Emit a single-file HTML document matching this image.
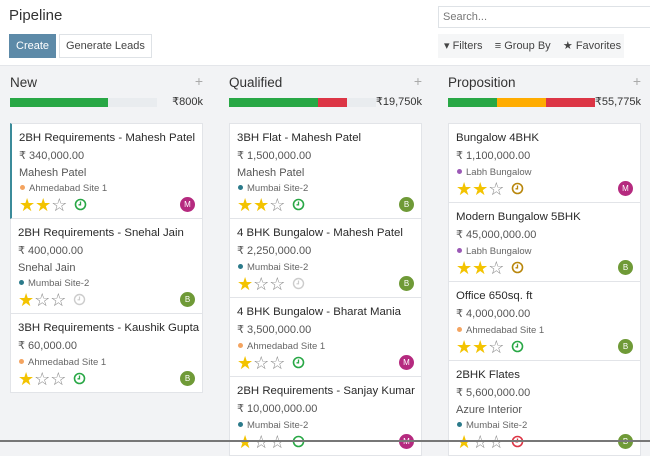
<!DOCTYPE html>
<html><head><meta charset="utf-8"><style>
*{box-sizing:border-box;margin:0;padding:0}
body{width:650px;height:444px;overflow:hidden;background:#f2f3f5;font-family:"Liberation Sans",sans-serif;color:#333;position:relative}
.top{position:absolute;left:0;top:0;width:650px;height:66px;background:#fff;border-bottom:1px solid #e4e6ea}
.title{position:absolute;left:9px;top:7px;font-size:15px;color:#333}
.btn{position:absolute;top:34px;height:24px;font-size:11px;line-height:22px;padding:0 6px;border:1px solid #dee2e6}
.create{left:9px;background:#5d8aa8;color:#fff;border-color:#5d8aa8}
.gen{left:59px;background:#fff;color:#444}
.search{position:absolute;left:438px;top:6px;width:220px;height:22px;border:1px solid #dee2e6;font-size:11px;color:#777;padding:4px 4px;line-height:13px}
.fbar{position:absolute;left:438px;top:34px;width:186px;height:24px;background:#f5f6f7;font-size:11px;line-height:24px;color:#444;padding-left:6px;white-space:nowrap}
.col{position:absolute;top:67px;width:193px}
.ch{position:absolute;top:8px;left:0;font-size:13.5px;color:#333}
.plus{position:absolute;top:6px;right:0;font-size:14px;color:#aaa}
.bar{position:absolute;top:31px;left:0;width:147px;height:9px;background:#e9ecef;display:flex}
.amt{position:absolute;top:28px;right:0;font-size:11px;color:#333}
.cards{position:absolute;top:56px;left:0;width:193px}
.card{background:#fff;border:1px solid #e2e4e8;border-top:none;padding:5px 7px 0 7px;position:relative}
.card:first-child{border-top:1px solid #e2e4e8}
.sel{border-left:2px solid #3b8b9a}
.t{font-size:11.4px;line-height:18px;color:#2a2a2a;white-space:nowrap}
.p{font-size:11px;line-height:18px;color:#555}
.n{font-size:11px;line-height:16px;color:#555}
.s{font-size:9.5px;line-height:15px;color:#666}
.s i{display:inline-block;width:5px;height:5px;border-radius:50%;margin:0 4px 1px 1px;vertical-align:middle}
.st{height:22px;position:relative;font-size:18px;line-height:18px;letter-spacing:0}
.f{color:#f3c300}.e{color:#888}
.ck{position:absolute;top:2px;left:55px}
.av{position:absolute;right:0;top:1px;width:15px;height:15px;border-radius:50%;color:#fff;font-size:8px;line-height:15px;text-align:center}
.M{background:#b52a7f}.B{background:#6f9a37}
.bot{position:absolute;left:0;top:440px;width:650px;height:2px;background:#777}
</style></head><body>
<div class="top">
<div class="title">Pipeline</div>
<div class="btn create">Create</div>
<div class="btn gen">Generate Leads</div>
<div class="search">Search...</div>
<div class="fbar">▾ Filters &nbsp;&nbsp; ≡ Group By &nbsp;&nbsp; ★ Favorites</div>
</div>

<div class="col" style="left:10px">
<div class="ch">New</div><div class="plus">+</div>
<div class="bar"><div style="width:98px;background:#28a745"></div></div>
<div class="amt">₹800k</div>
<div class="cards">
<div class="card sel"><div class="t">2BH Requirements - Mahesh Patel</div><div class="p">₹ 340,000.00</div><div class="n">Mahesh Patel</div><div class="s"><i style="background:#f4a460"></i>Ahmedabad Site 1</div><div class="st"><span class="f">★★</span><span class="e">☆</span><svg class="ck" width="13" height="13" viewBox="0 0 13 13"><circle cx="6.5" cy="6.5" r="5" fill="none" stroke="#28a745" stroke-width="1.6"/><path d="M6.5 3.5V6.8H4.5" fill="none" stroke="#28a745" stroke-width="1.3"/></svg><div class="av M">M</div></div></div>
<div class="card"><div class="t">2BH Requirements - Snehal Jain</div><div class="p">₹ 400,000.00</div><div class="n">Snehal Jain</div><div class="s"><i style="background:#2b7a8a"></i>Mumbai Site-2</div><div class="st"><span class="f">★</span><span class="e">☆☆</span><svg class="ck" width="13" height="13" viewBox="0 0 13 13"><circle cx="6.5" cy="6.5" r="5" fill="none" stroke="#ccc" stroke-width="1.4"/><path d="M6.5 3.5V6.8H4.5" fill="none" stroke="#ccc" stroke-width="1.2"/></svg><div class="av B">B</div></div></div>
<div class="card"><div class="t">3BH Requirements - Kaushik Gupta</div><div class="p">₹ 60,000.00</div><div class="s"><i style="background:#f4a460"></i>Ahmedabad Site 1</div><div class="st"><span class="f">★</span><span class="e">☆☆</span><svg class="ck" width="13" height="13" viewBox="0 0 13 13"><circle cx="6.5" cy="6.5" r="5" fill="none" stroke="#28a745" stroke-width="1.6"/><path d="M6.5 3.5V6.8H4.5" fill="none" stroke="#28a745" stroke-width="1.3"/></svg><div class="av B">B</div></div></div>
</div></div>

<div class="col" style="left:229px">
<div class="ch">Qualified</div><div class="plus">+</div>
<div class="bar"><div style="width:89px;background:#28a745"></div><div style="width:29px;background:#dc3545"></div></div>
<div class="amt">₹19,750k</div>
<div class="cards">
<div class="card"><div class="t">3BH Flat - Mahesh Patel</div><div class="p">₹ 1,500,000.00</div><div class="n">Mahesh Patel</div><div class="s"><i style="background:#2b7a8a"></i>Mumbai Site-2</div><div class="st"><span class="f">★★</span><span class="e">☆</span><svg class="ck" width="13" height="13" viewBox="0 0 13 13"><circle cx="6.5" cy="6.5" r="5" fill="none" stroke="#28a745" stroke-width="1.6"/><path d="M6.5 3.5V6.8H4.5" fill="none" stroke="#28a745" stroke-width="1.3"/></svg><div class="av B">B</div></div></div>
<div class="card"><div class="t">4 BHK Bungalow - Mahesh Patel</div><div class="p">₹ 2,250,000.00</div><div class="s"><i style="background:#2b7a8a"></i>Mumbai Site-2</div><div class="st"><span class="f">★</span><span class="e">☆☆</span><svg class="ck" width="13" height="13" viewBox="0 0 13 13"><circle cx="6.5" cy="6.5" r="5" fill="none" stroke="#ccc" stroke-width="1.4"/><path d="M6.5 3.5V6.8H4.5" fill="none" stroke="#ccc" stroke-width="1.2"/></svg><div class="av B">B</div></div></div>
<div class="card"><div class="t">4 BHK Bungalow - Bharat Mania</div><div class="p">₹ 3,500,000.00</div><div class="s"><i style="background:#f4a460"></i>Ahmedabad Site 1</div><div class="st"><span class="f">★</span><span class="e">☆☆</span><svg class="ck" width="13" height="13" viewBox="0 0 13 13"><circle cx="6.5" cy="6.5" r="5" fill="none" stroke="#28a745" stroke-width="1.6"/><path d="M6.5 3.5V6.8H4.5" fill="none" stroke="#28a745" stroke-width="1.3"/></svg><div class="av M">M</div></div></div>
<div class="card"><div class="t">2BH Requirements - Sanjay Kumar</div><div class="p">₹ 10,000,000.00</div><div class="s"><i style="background:#2b7a8a"></i>Mumbai Site-2</div><div class="st"><span class="f">★</span><span class="e">☆☆</span><svg class="ck" width="13" height="13" viewBox="0 0 13 13"><circle cx="6.5" cy="6.5" r="5" fill="none" stroke="#28a745" stroke-width="1.6"/></svg><div class="av M">M</div></div></div>
</div></div>

<div class="col" style="left:448px">
<div class="ch">Proposition</div><div class="plus">+</div>
<div class="bar"><div style="width:49px;background:#28a745"></div><div style="width:49px;background:#ffac00"></div><div style="width:49px;background:#dc3545"></div></div>
<div class="amt">₹55,775k</div>
<div class="cards">
<div class="card"><div class="t">Bungalow 4BHK</div><div class="p">₹ 1,100,000.00</div><div class="s"><i style="background:#9b59b6"></i>Labh Bungalow</div><div class="st"><span class="f">★★</span><span class="e">☆</span><svg class="ck" width="13" height="13" viewBox="0 0 13 13"><circle cx="6.5" cy="6.5" r="5" fill="none" stroke="#b8860b" stroke-width="1.6"/><path d="M6.5 3.5V6.8H4.5" fill="none" stroke="#b8860b" stroke-width="1.3"/></svg><div class="av M">M</div></div></div>
<div class="card"><div class="t">Modern Bungalow 5BHK</div><div class="p">₹ 45,000,000.00</div><div class="s"><i style="background:#9b59b6"></i>Labh Bungalow</div><div class="st"><span class="f">★★</span><span class="e">☆</span><svg class="ck" width="13" height="13" viewBox="0 0 13 13"><circle cx="6.5" cy="6.5" r="5" fill="none" stroke="#b8860b" stroke-width="1.6"/><path d="M6.5 3.5V6.8H4.5" fill="none" stroke="#b8860b" stroke-width="1.3"/></svg><div class="av B">B</div></div></div>
<div class="card"><div class="t">Office 650sq. ft</div><div class="p">₹ 4,000,000.00</div><div class="s"><i style="background:#f4a460"></i>Ahmedabad Site 1</div><div class="st"><span class="f">★★</span><span class="e">☆</span><svg class="ck" width="13" height="13" viewBox="0 0 13 13"><circle cx="6.5" cy="6.5" r="5" fill="none" stroke="#28a745" stroke-width="1.6"/><path d="M6.5 3.5V6.8H4.5" fill="none" stroke="#28a745" stroke-width="1.3"/></svg><div class="av B">B</div></div></div>
<div class="card"><div class="t">2BHK Flates</div><div class="p">₹ 5,600,000.00</div><div class="n">Azure Interior</div><div class="s"><i style="background:#2b7a8a"></i>Mumbai Site-2</div><div class="st"><span class="f">★</span><span class="e">☆☆</span><svg class="ck" width="13" height="13" viewBox="0 0 13 13"><circle cx="6.5" cy="6.5" r="5" fill="none" stroke="#dc3545" stroke-width="1.6"/><path d="M6.5 3.5V6.8H4.5" fill="none" stroke="#dc3545" stroke-width="1.3"/></svg><div class="av B">B</div></div></div>
</div></div>

<div class="bot"></div>
</body></html>
